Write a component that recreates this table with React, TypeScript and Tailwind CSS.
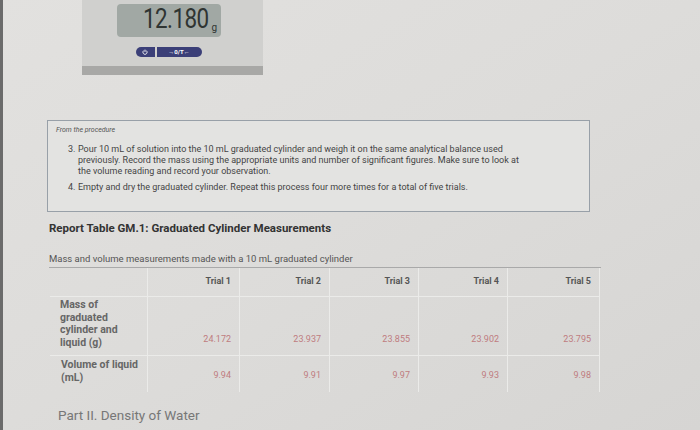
export default function App() {
  const mass = ["24.172", "23.937", "23.855", "23.902", "23.795"];
  const volume = ["9.94", "9.91", "9.97", "9.93", "9.98"];

  return (
    <div className="relative h-[430px] w-[700px] overflow-hidden bg-gradient-to-br from-[#e2e1df] via-[#dddcda] to-[#d6d5d3] font-['Roboto',sans-serif]">
      <div className="absolute left-0 top-0 h-full w-[3px] bg-[#6b6b6b]" />

      {/* balance picture */}
      <div className="ml-[82px] w-[181px]">
        <div className="flex h-[66px] flex-col items-center bg-[#d0d0ce] pt-[4px]">
          <div className="ml-[-8px] flex h-[33px] w-[104px] items-end rounded-[4px] bg-[#a1a8a4] pb-[4px] pl-[26px] text-[#2f3432]">
            <span className="mr-[-16px] inline-block origin-left scale-x-[0.8] text-[28px] leading-none tracking-tight">12.180</span>
            <span className="ml-[3px] text-[10px] leading-none">g</span>
          </div>
          <div className="ml-[-8px] mt-[10px] flex h-[10px] gap-[2px]">
            <div className="flex w-[19px] items-center justify-center rounded-l-full bg-[#3b3f78] text-[7px] text-white">
              <svg width="6" height="6" viewBox="0 0 10 10" fill="none" stroke="white" strokeWidth="1.4">
                <path d="M3 2.5A3.5 3.5 0 1 0 7 2.5" />
                <path d="M5 1v4" />
              </svg>
            </div>
            <div className="flex w-[45px] items-center justify-center rounded-r-full bg-[#3b3f78] text-[6px] font-bold leading-none text-white">
              →0/T←
            </div>
          </div>
        </div>
        <div className="h-[9px] bg-[#a8a8a6]" />
      </div>

      {/* procedure box */}
      <div className="ml-[47px] mt-[45px] h-[92px] w-[543px] border-[1.5px] border-[#98a0a8] bg-[#e3e3e1] pl-[8px] pt-[4px] text-[#444]">
        <div className="text-[7px] italic leading-[10px] text-[#555]">From the procedure</div>
        <ol className="mt-[9px] w-[476px] pl-[12px] text-[9px] leading-[11px]">
          <li className="flex">
            <span className="w-[10px] shrink-0">3.</span>
            <span>
              Pour 10 mL of solution into the 10 mL graduated cylinder and weigh it on the same analytical balance used previously. Record the mass using the appropriate units and number of significant figures. Make sure to look at the volume reading and record your observation.
            </span>
          </li>
          <li className="mt-[5px] flex">
            <span className="w-[10px] shrink-0">4.</span>
            <span>Empty and dry the graduated cylinder. Repeat this process four more times for a total of five trials.</span>
          </li>
        </ol>
      </div>

      {/* report table */}
      <div className="ml-[49px] mt-[9px] text-[11.5px] font-bold leading-[15px] text-[#333]">
        Report Table GM.1: Graduated Cylinder Measurements
      </div>
      <div className="ml-[49px] mt-[17px] w-[552px] border-b-[1.5px] border-[#a9a9a9] pb-[2px] text-[9.5px] leading-[12px] text-[#555]">
        Mass and volume measurements made with a 10 mL graduated cylinder
      </div>

      <div className="ml-[50px] grid w-[550px] grid-cols-[98px_92px_90px_89px_89px_92px] text-[9px] text-[#666]">
        <div className="h-[29px] border-b border-r border-[#ebebe9]" />
        {["Trial 1", "Trial 2", "Trial 3", "Trial 4", "Trial 5"].map((t) => (
          <div key={t} className="flex h-[29px] items-center justify-end border-b border-r border-[#ebebe9] pr-[8px] font-bold text-[#555]">
            {t}
          </div>
        ))}

        <div className="h-[59px] border-b border-r border-[#ebebe9] pl-[10px] pt-[2px] text-[10.5px] font-bold leading-[12.5px]">
          Mass of
          <br />
          graduated
          <br />
          cylinder and
          <br />
          liquid (g)
        </div>
        {mass.map((m, i) => (
          <div key={i} className="flex h-[59px] items-end justify-end border-b border-r border-[#ebebe9] pb-[9px] pr-[8px] text-[#bf7c80]">
            {m}
          </div>
        ))}

        <div className="h-[36px] border-r border-[#ebebe9] pl-[11px] pt-[3px] text-[10.5px] font-bold leading-[12.5px]">
          Volume of liquid
          <br />
          (mL)
        </div>
        {volume.map((v, i) => (
          <div key={i} className="flex h-[36px] items-end justify-end border-r border-[#ebebe9] pb-[10px] pr-[8px] text-[#bf7c80]">
            {v}
          </div>
        ))}
      </div>

      <div className="ml-[58px] mt-[15px] text-[13.5px] leading-[16px] text-[#777]">Part II. Density of Water</div>
    </div>
  );
}
